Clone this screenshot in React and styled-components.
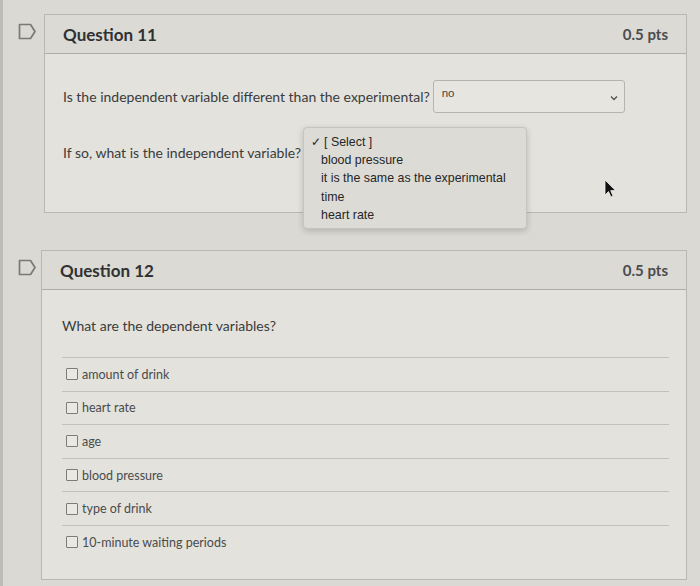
import React from 'react';
import styled, { createGlobalStyle } from 'styled-components';

const Global = createGlobalStyle`
  html, body {
    margin: 0;
    padding: 0;
    background: #d9d8d2;
  }
  body {
    font-family: Lato, "Open Sans", sans-serif;
    color: #3b3d3f;
  }
`;

const Page = styled.div`
  width: 700px;
  height: 586px;
  box-sizing: border-box;
  padding: 14px 13px 0 0;
  border-left: 3px solid #bebcb6;
  background: #dad9d3;
  display: flex;
  flex-direction: column;
  gap: 37px;
  overflow: hidden;
  position: relative;
`;

const QuestionRow = styled.div`
  display: flex;
  align-items: flex-start;
`;

const Gutter = styled.div`
  width: 41px;
  flex-shrink: 0;
  display: flex;
  justify-content: flex-start;
  padding-left: 15px;
  box-sizing: border-box;
  padding-top: ${p => p.$top}px;
`;

const Card = styled.div`
  flex: 1;
  border: 1px solid #b9b7b1;
  background: #e3e2dc;
  margin-left: ${p => p.$shift || 0}px;
`;

const Header = styled.div`
  height: 38px;
  display: flex;
  align-items: center;
  justify-content: space-between;
  padding: 0 18px 0 18px;
  background: #dbdad4;
  border-bottom: 1px solid #aeaca6;
`;

const Title = styled.div`
  font-size: 17px;
  font-weight: 700;
  color: #2f3133;
`;

const Points = styled.div`
  font-size: 15px;
  font-weight: 700;
  color: #4a4c4e;
`;

const Body = styled.div`
  padding: ${p => p.$pad};
  display: flex;
  flex-direction: column;
`;

const Line = styled.div`
  display: flex;
  align-items: center;
  height: 33px;
  font-size: 14px;
  color: #3a3c3e;
  margin-top: ${p => p.$gap || 0}px;
`;

const SelectBox = styled.div`
  width: 192px;
  height: 33px;
  box-sizing: border-box;
  margin-left: 3px;
  border: 1px solid #b6b4ae;
  border-radius: 3px;
  background: #e6e5e0;
  display: flex;
  justify-content: space-between;
  padding: 6px 6px 0 8px;
  font-family: "Liberation Sans", Arial, sans-serif;
  font-size: 11.5px;
  color: #444;
`;

const Chevron = styled.svg`
  margin-top: 8px;
`;

const MenuAnchor = styled.div`
  position: relative;
  width: 0;
  height: 33px;
  margin-left: 2px;
`;

const Menu = styled.div`
  position: absolute;
  left: 0;
  top: -9px;
  width: 224px;
  box-sizing: border-box;
  padding: 5px 0 4px 0;
  background: #dcdbd6;
  border: 1px solid #c6c4bf;
  border-radius: 4px;
  box-shadow: 0 2px 6px rgba(0, 0, 0, 0.18);
  font-family: "Liberation Sans", Arial, sans-serif;
  font-size: 12.4px;
  color: #262626;
  z-index: 2;
`;

const Option = styled.div`
  height: 18.2px;
  line-height: 18px;
  display: flex;
  align-items: center;
`;

const Mark = styled.span`
  width: 17px;
  text-align: right;
  box-sizing: border-box;
  font-size: 12px;
`;

const OptText = styled.span`
  padding-left: ${p => (p.$first ? 3 : 0)}px;
`;

const Prompt = styled.div`
  font-size: 14px;
  color: #3a3c3e;
  height: 33px;
  display: flex;
  align-items: center;
`;

const Answers = styled.div`
  margin: 15px 0 0 0;
  display: flex;
  flex-direction: column;
`;

const Answer = styled.label`
  height: 33.6px;
  box-sizing: border-box;
  border-top: 1px solid #c3c1bb;
  display: flex;
  align-items: center;
  gap: 4px;
  padding-left: 4px;
  font-size: 12.5px;
  color: #4a4b4c;
`;

const Box = styled.span`
  width: 10px;
  height: 10px;
  border: 1.6px solid #7d7c79;
  border-radius: 1px;
  background: #e9e8e3;
  flex-shrink: 0;
`;

const Cursor = styled.svg`
  position: absolute;
  left: 600px;
  top: 179px;
`;

function Flag() {
  return (
    <svg width="19" height="17" viewBox="0 0 19 17">
      <path d="M1.5 1.5 H12.5 L17 8.5 L12.5 15.5 H1.5 Z" fill="none" stroke="#7a7976" strokeWidth="1.7" strokeLinejoin="round" />
    </svg>
  );
}

const options = ['[ Select ]', 'blood pressure', 'it is the same as the experimental', 'time', 'heart rate'];
const answers = ['amount of drink', 'heart rate', 'age', 'blood pressure', 'type of drink', '10-minute waiting periods'];

export default function App() {
  return (
    <>
      <Global />
      <Page>
        <QuestionRow>
          <Gutter $top={9}><Flag /></Gutter>
          <Card>
            <Header>
              <Title>Question 11</Title>
              <Points>0.5 pts</Points>
            </Header>
            <Body $pad="26px 19px 43px 18px">
              <Line>
                Is the independent variable different than the experimental?
                <SelectBox>
                  <span>no</span>
                  <Chevron width="8" height="6" viewBox="0 0 8 6">
                    <path d="M1 1.5 L4 4.5 L7 1.5" fill="none" stroke="#555" strokeWidth="1.4" />
                  </Chevron>
                </SelectBox>
              </Line>
              <Line $gap={23}>
                If so, what is the independent variable?
                <MenuAnchor>
                  <Menu>
                    {options.map((o, i) => (
                      <Option key={o}>
                        <Mark>{i === 0 ? '✓' : ''}</Mark>
                        <OptText $first={i === 0}>{o}</OptText>
                      </Option>
                    ))}
                  </Menu>
                </MenuAnchor>
              </Line>
            </Body>
          </Card>
        </QuestionRow>

        <QuestionRow>
          <Gutter $top={9}><Flag /></Gutter>
          <Card $shift={-3}>
            <Header>
              <Title>Question 12</Title>
              <Points>0.5 pts</Points>
            </Header>
            <Body $pad="19px 17px 20px 20px">
              <Prompt>What are the dependent variables?</Prompt>
              <Answers>
                {answers.map(a => (
                  <Answer key={a}>
                    <Box />
                    {a}
                  </Answer>
                ))}
              </Answers>
            </Body>
          </Card>
        </QuestionRow>

        <Cursor width="14" height="20" viewBox="0 0 14 20">
          <path d="M2 1 L2 16 L5.5 12.5 L8 18 L10 17 L7.7 11.6 L12.5 11.6 Z" fill="#111" stroke="#eee" strokeWidth="0.8" />
        </Cursor>
      </Page>
    </>
  );
}
